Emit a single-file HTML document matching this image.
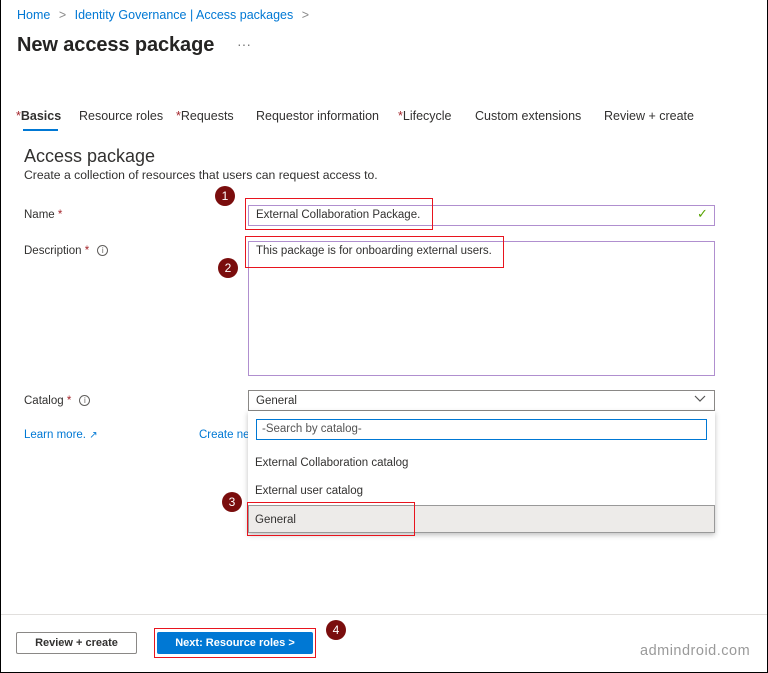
<!DOCTYPE html><html><head><style>
*{box-sizing:border-box;margin:0;padding:0}
body{width:768px;height:673px;background:#fff;font-family:"Liberation Sans",sans-serif;color:#323130;position:relative;overflow:hidden;font-size:11.5px}
.a{position:absolute;white-space:nowrap}
.frame{position:absolute;left:0;top:0;width:768px;height:673px;border:1.5px solid #000;border-top:none}
.blue{color:#0078d4}
.req{color:#a4262c}
.box{position:absolute;border:1px solid #8a8886}
.red{position:absolute;border:1.5px solid #e8141e}
.c{position:absolute;width:20px;height:20px;border-radius:50%;background:#7a0d0d;color:#fff;font-size:12px;text-align:center;line-height:20px}
.info{display:inline-block;width:11px;height:11px;border:1px solid #605e5c;border-radius:50%;font-size:8px;line-height:9px;text-align:center;vertical-align:1px;margin-left:8px;color:#605e5c}
.t{position:absolute;top:109px;font-size:12.5px;white-space:nowrap}
</style></head><body>
<div class="frame"></div>
<div class="a blue" style="left:17px;top:8px;font-size:12.5px">Home <span style="color:#888;margin:0 5px">&gt;</span> Identity Governance | Access packages <span style="color:#888;margin-left:5px">&gt;</span></div>
<div class="a" style="left:17px;top:34px;font-size:20px;font-weight:bold;color:#252423;letter-spacing:-0.1px">New access package</div>
<div class="a" style="left:237px;top:36px;font-size:14px;color:#777">···</div>
<div class="t" style="left:16px"><span class="req">*</span><b>Basics</b></div>
<div class="t" style="left:79px">Resource roles</div>
<div class="t" style="left:176px"><span class="req">*</span>Requests</div>
<div class="t" style="left:256px">Requestor information</div>
<div class="t" style="left:398px"><span class="req">*</span>Lifecycle</div>
<div class="t" style="left:475px">Custom extensions</div>
<div class="t" style="left:604px">Review + create</div>
<div class="a" style="left:23px;top:129px;width:35px;height:2px;background:#0078d4"></div>
<div class="a" style="left:24px;top:146px;font-size:18px">Access package</div>
<div class="a" style="left:24px;top:168px;font-size:12.2px">Create a collection of resources that users can request access to.</div>
<div class="a" style="left:24px;top:209px">Name <span class="req">*</span></div>
<div class="box" style="left:248px;top:205px;width:467px;height:21px;border-color:#b08fcf"></div>
<div class="a" style="left:256px;top:209px">External Collaboration Package.</div>
<div class="a" style="left:697px;top:206px;color:#57a300;font-size:13px">✓</div>
<div class="a" style="left:24px;top:245px">Description <span class="req">*</span><span class="info">i</span></div>
<div class="box" style="left:248px;top:241px;width:467px;height:135px;border-color:#b08fcf"></div>
<div class="a" style="left:256px;top:245px">This package is for onboarding external users.</div>
<div class="a" style="left:24px;top:395px">Catalog <span class="req">*</span><span class="info">i</span></div>
<div class="box" style="left:248px;top:390px;width:467px;height:21px"></div>
<div class="a" style="left:256px;top:395px">General</div>
<svg class="a" style="left:694px;top:395px" width="12" height="8"><path d="M1 1 L6 6 L11 1" fill="none" stroke="#555" stroke-width="1.2"/></svg>
<div class="a blue" style="left:24px;top:429px">Learn more. <span style="font-size:10px">↗</span></div>
<div class="a blue" style="left:199px;top:429px">Create ne</div>
<div class="a" style="left:248px;top:411px;width:467px;height:122px;background:#fff;box-shadow:0 2px 5px rgba(0,0,0,.25)"></div>
<div class="box" style="left:256px;top:419px;width:451px;height:21px;border:1.5px solid #0078d4"></div>
<div class="a" style="left:262px;top:423px;color:#555">-Search by catalog-</div>
<div class="a" style="left:255px;top:457px">External Collaboration catalog</div>
<div class="a" style="left:255px;top:485px">External user catalog</div>
<div class="a" style="left:248px;top:505px;width:467px;height:28px;background:#edebe9;border:1px solid #999"></div>
<div class="a" style="left:255px;top:514px">General</div>
<div class="red" style="left:245px;top:198px;width:188px;height:32px"></div>
<div class="red" style="left:245px;top:236px;width:259px;height:32px"></div>
<div class="red" style="left:247px;top:502px;width:168px;height:34px"></div>
<div class="c" style="left:215px;top:186px">1</div>
<div class="c" style="left:218px;top:258px">2</div>
<div class="c" style="left:222px;top:492px">3</div>
<div class="c" style="left:326px;top:620px">4</div>
<div class="a" style="left:1px;top:614px;width:766px;height:1px;background:#e1dfdd"></div>
<div class="a" style="left:16px;top:632px;width:121px;height:22px;border:1px solid #8a8886;border-radius:2px;text-align:center;line-height:20px;font-weight:bold;font-size:11px">Review + create</div>
<div class="red" style="left:154px;top:628px;width:162px;height:30px"></div>
<div class="a" style="left:157px;top:632px;width:156px;height:22px;background:#0078d4;color:#fff;border-radius:2px;text-align:center;line-height:22px;font-weight:bold;font-size:11px">Next: Resource roles &gt;</div>
<div class="a" style="left:640px;top:643px;font-size:14.5px;color:#9a9a9a;letter-spacing:.5px">admindroid.com</div>
</body></html>
